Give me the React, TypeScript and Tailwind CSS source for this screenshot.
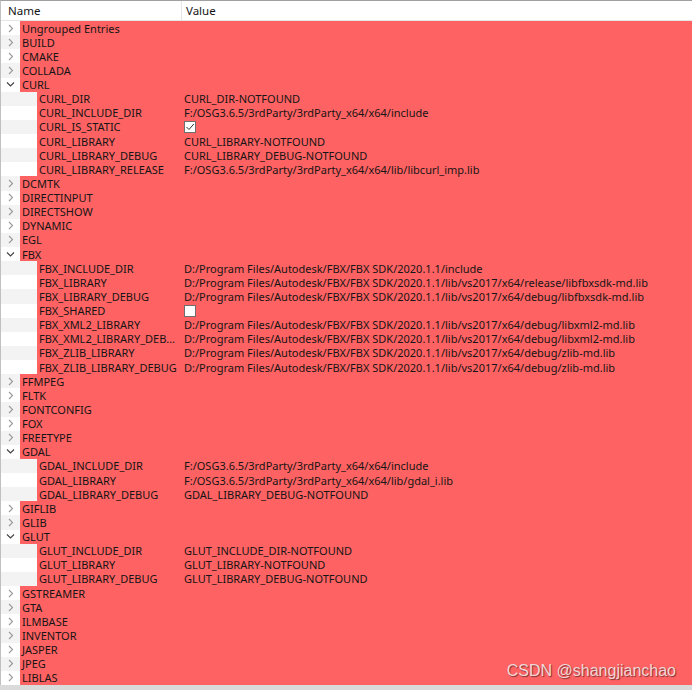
import React from "react";

type Row = { name: string; value?: string; child?: boolean; expanded?: boolean; check?: boolean | null };

const rows: Row[] = [
  { name: "Ungrouped Entries" },
  { name: "BUILD" },
  { name: "CMAKE" },
  { name: "COLLADA" },
  { name: "CURL", expanded: true },
  { name: "CURL_DIR", value: "CURL_DIR-NOTFOUND", child: true },
  { name: "CURL_INCLUDE_DIR", value: "F:/OSG3.6.5/3rdParty/3rdParty_x64/x64/include", child: true },
  { name: "CURL_IS_STATIC", child: true, check: true },
  { name: "CURL_LIBRARY", value: "CURL_LIBRARY-NOTFOUND", child: true },
  { name: "CURL_LIBRARY_DEBUG", value: "CURL_LIBRARY_DEBUG-NOTFOUND", child: true },
  { name: "CURL_LIBRARY_RELEASE", value: "F:/OSG3.6.5/3rdParty/3rdParty_x64/x64/lib/libcurl_imp.lib", child: true },
  { name: "DCMTK" },
  { name: "DIRECTINPUT" },
  { name: "DIRECTSHOW" },
  { name: "DYNAMIC" },
  { name: "EGL" },
  { name: "FBX", expanded: true },
  { name: "FBX_INCLUDE_DIR", value: "D:/Program Files/Autodesk/FBX/FBX SDK/2020.1.1/include", child: true },
  { name: "FBX_LIBRARY", value: "D:/Program Files/Autodesk/FBX/FBX SDK/2020.1.1/lib/vs2017/x64/release/libfbxsdk-md.lib", child: true },
  { name: "FBX_LIBRARY_DEBUG", value: "D:/Program Files/Autodesk/FBX/FBX SDK/2020.1.1/lib/vs2017/x64/debug/libfbxsdk-md.lib", child: true },
  { name: "FBX_SHARED", child: true, check: false },
  { name: "FBX_XML2_LIBRARY", value: "D:/Program Files/Autodesk/FBX/FBX SDK/2020.1.1/lib/vs2017/x64/debug/libxml2-md.lib", child: true },
  { name: "FBX_XML2_LIBRARY_DEB...", value: "D:/Program Files/Autodesk/FBX/FBX SDK/2020.1.1/lib/vs2017/x64/debug/libxml2-md.lib", child: true },
  { name: "FBX_ZLIB_LIBRARY", value: "D:/Program Files/Autodesk/FBX/FBX SDK/2020.1.1/lib/vs2017/x64/debug/zlib-md.lib", child: true },
  { name: "FBX_ZLIB_LIBRARY_DEBUG", value: "D:/Program Files/Autodesk/FBX/FBX SDK/2020.1.1/lib/vs2017/x64/debug/zlib-md.lib", child: true },
  { name: "FFMPEG" },
  { name: "FLTK" },
  { name: "FONTCONFIG" },
  { name: "FOX" },
  { name: "FREETYPE" },
  { name: "GDAL", expanded: true },
  { name: "GDAL_INCLUDE_DIR", value: "F:/OSG3.6.5/3rdParty/3rdParty_x64/x64/include", child: true },
  { name: "GDAL_LIBRARY", value: "F:/OSG3.6.5/3rdParty/3rdParty_x64/x64/lib/gdal_i.lib", child: true },
  { name: "GDAL_LIBRARY_DEBUG", value: "GDAL_LIBRARY_DEBUG-NOTFOUND", child: true },
  { name: "GIFLIB" },
  { name: "GLIB" },
  { name: "GLUT", expanded: true },
  { name: "GLUT_INCLUDE_DIR", value: "GLUT_INCLUDE_DIR-NOTFOUND", child: true },
  { name: "GLUT_LIBRARY", value: "GLUT_LIBRARY-NOTFOUND", child: true },
  { name: "GLUT_LIBRARY_DEBUG", value: "GLUT_LIBRARY_DEBUG-NOTFOUND", child: true },
  { name: "GSTREAMER" },
  { name: "GTA" },
  { name: "ILMBASE" },
  { name: "INVENTOR" },
  { name: "JASPER" },
  { name: "JPEG" },
  { name: "LIBLAS" },
];

function Chevron({ open }: { open?: boolean }) {
  return open ? (
    <svg width="9" height="9" viewBox="0 0 9 9" className="block">
      <path d="M1 2.5 L4.5 6 L8 2.5" fill="none" stroke="#404040" strokeWidth="1.1" />
    </svg>
  ) : (
    <svg width="9" height="9" viewBox="0 0 9 9" className="block">
      <path d="M3 1 L6.5 4.5 L3 8" fill="none" stroke="#9a9a9a" strokeWidth="1.1" />
    </svg>
  );
}

function Check({ on }: { on: boolean }) {
  return (
    <div className="w-[12px] h-[12px] bg-white border border-[#6e6e6e] flex items-center justify-center">
      {on && (
        <svg width="10" height="10" viewBox="0 0 10 10">
          <path d="M1.5 5 L4 7.5 L8.8 2" fill="none" stroke="#333" strokeWidth="1" />
        </svg>
      )}
    </div>
  );
}

export default function App() {
  return (
    <div
      className="relative w-[692px] h-[690px] overflow-hidden bg-[#dadada] text-[#151515]"
      style={{ fontFamily: '"Noto Sans", "Open Sans", sans-serif' }}
    >
      <div className="border-t border-[#a0a0a0] border-l border-l-[#c0c0c0] bg-white">
        <div className="flex h-[20px] border-b border-[#e5e5e5] text-[11.5px] items-center">
          <div className="w-[181px] pl-[7px] border-r border-[#e5e5e5] h-full flex items-center">Name</div>
          <div className="pl-[4px]">Value</div>
        </div>
        <div className="text-[11px] leading-[14px]">
          {rows.map((r, i) => (
            <div
              key={i}
              className={`flex h-[14.13px] ${i % 2 === 1 ? "bg-[#f3f3f3]" : "bg-white"}`}
            >
              {r.child ? (
                <div className="w-[36px] shrink-0" />
              ) : (
                <div className="w-[19px] shrink-0 flex items-center pl-[5px]">
                  <Chevron open={r.expanded} />
                </div>
              )}
              <div className="flex-1 flex items-center bg-[#ff6262] pt-[1px]">
                <div className={`${r.child ? "w-[146px] pl-[2px]" : "pl-[2px]"} relative whitespace-nowrap`}>{r.name}</div>
                {r.child && (
                  <div className="relative pl-[1px] whitespace-nowrap">
                    {r.check === true || r.check === false ? <Check on={r.check} /> : r.value}
                  </div>
                )}
              </div>
            </div>
          ))}
        </div>
      </div>
      <div
        className="absolute right-[16px] top-[659px] text-[16px] text-[#f0d6d6]"
        style={{ fontFamily: '"Liberation Sans", Arial, sans-serif', textShadow: "1px 1px 1px rgba(90,40,40,0.8)" }}
      >
        CSDN @shangjianchao
      </div>
    </div>
  );
}
